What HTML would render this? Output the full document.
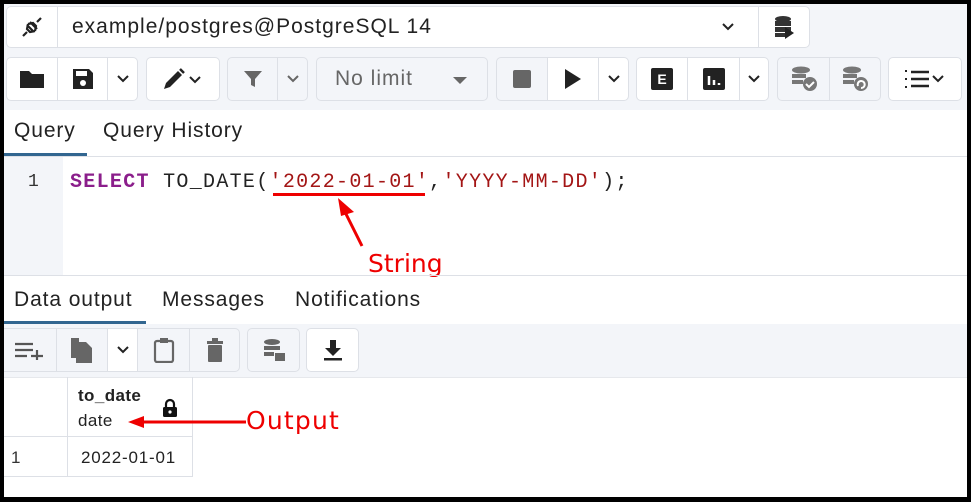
<!DOCTYPE html>
<html><head><meta charset="utf-8"><style>
*{margin:0;padding:0;box-sizing:border-box}
body{width:971px;height:502px;background:#000;position:relative;overflow:hidden;font-family:"Liberation Sans",sans-serif}
#in{position:absolute;left:4px;top:4px;width:963px;height:493px;background:#fff;overflow:hidden}
.a{position:absolute}
.bar{position:absolute;left:0;width:963px;background:#f3f5f9}
.b{position:absolute;border:1px solid #dde0e6;background:#fff;display:flex;align-items:center;justify-content:center}
.g{background:#f3f5f9}
.t{position:absolute;font-size:21px;letter-spacing:0.9px;color:#222}
svg{display:block}
</style></head><body><div id="in">
<div class="bar" style="top:0;height:50px"></div>
<div class="b" style="left:2px;top:2px;width:52px;height:42px;border-radius:5px 0 0 5px">
<svg width="26" height="26" viewBox="0 0 26 26" fill="none" stroke="#222" stroke-width="2.2"><path d="M4 22l4-4M22 4l-4 4M8 11l7 7M11 8l7 7M9 10l-1 5 3 3 5-1M16 17l1-5-3-3-5 1"/></svg></div>
<div class="b" style="left:53px;top:2px;width:702px;height:42px;justify-content:flex-start;padding-left:14px;font-size:21px;letter-spacing:1px;color:#222">example/postgres@PostgreSQL 14
<svg class="a" style="left:663px;top:15px" width="14" height="10" viewBox="0 0 14 10"><path d="M2 2l5 5 5-5" fill="none" stroke="#222" stroke-width="2"/></svg></div>
<div class="b" style="left:754px;top:2px;width:52px;height:42px;border-radius:0 5px 5px 0">
<svg width="22" height="24" viewBox="0 0 22 24"><ellipse cx="10" cy="4" rx="8" ry="3" fill="#333"/><rect x="2" y="6" width="16" height="5" fill="#333"/><rect x="2" y="12" width="16" height="5" fill="#333"/><rect x="2" y="18" width="10" height="4" fill="#333"/><path d="M12 12l9 6-9 6z" fill="#222"/></svg></div>
<div class="bar" style="top:50px;height:56px"></div>
<div class="b" style="left:2px;top:53px;width:52px;height:44px;border-radius:5px 0 0 5px"><svg width="26" height="20"><path d="M1 2h9l3 3h12v14H1z" fill="#222"/></svg></div>
<div class="b" style="left:53px;top:53px;width:51px;height:44px"><svg width="22" height="22"><path d="M1 1h16l4 4v16H1z" fill="#222"/><rect x="4" y="3" width="11" height="5" fill="#fff"/><circle cx="11" cy="15" r="3" fill="#fff"/></svg></div>
<div class="b" style="left:103px;top:53px;width:31px;height:44px;border-radius:0 5px 5px 0"><svg width="14" height="10"><path d="M2 2l5 5 5-5" fill="none" stroke="#222" stroke-width="2"/></svg></div>
<div class="b" style="left:142px;top:53px;width:74px;height:44px;border-radius:5px"><svg width="42" height="24"><path d="M2 22l2-6 12-12 4 4-12 12z" fill="#222"/><path d="M18 2l4 4" stroke="#222" stroke-width="2.5"/><path d="M28 10l5 5 5-5" fill="none" stroke="#222" stroke-width="2"/></svg></div>
<div class="b g" style="left:223px;top:53px;width:51px;height:44px;border-radius:5px 0 0 5px"><svg width="20" height="20"><path d="M1 2h18l-7 8v8l-4-2v-6z" fill="#666"/></svg></div>
<div class="b g" style="left:273px;top:53px;width:31px;height:44px;border-radius:0 5px 5px 0"><svg width="14" height="10"><path d="M2 2l5 5 5-5" fill="none" stroke="#666" stroke-width="2"/></svg></div>
<div class="b g" style="left:312px;top:53px;width:172px;height:44px;border-radius:5px;justify-content:flex-start;padding-left:18px;font-size:21px;letter-spacing:1px;color:#666">No limit<svg class="a" style="left:136px;top:19px" width="14" height="8"><path d="M0 0h14l-7 7z" fill="#666"/></svg></div>
<div class="b g" style="left:492px;top:53px;width:52px;height:44px;border-radius:5px 0 0 5px"><svg width="18" height="18"><rect width="18" height="18" rx="2" fill="#666"/></svg></div>
<div class="b" style="left:543px;top:53px;width:52px;height:44px"><svg width="18" height="20"><path d="M1 0l16 10-16 10z" fill="#222"/></svg></div>
<div class="b" style="left:594px;top:53px;width:31px;height:44px;border-radius:0 5px 5px 0"><svg width="14" height="10"><path d="M2 2l5 5 5-5" fill="none" stroke="#222" stroke-width="2"/></svg></div>
<div class="b" style="left:632px;top:53px;width:52px;height:44px;border-radius:5px 0 0 5px"><svg width="22" height="22"><rect width="22" height="22" rx="2" fill="#222"/><text x="11" y="16" text-anchor="middle" font-size="14" font-weight="bold" fill="#fff" font-family="Liberation Sans">E</text></svg></div>
<div class="b" style="left:683px;top:53px;width:53px;height:44px"><svg width="22" height="22"><rect width="22" height="22" rx="2" fill="#222"/><path d="M6 8v9M11 12v5M16 15v2" stroke="#fff" stroke-width="2.5"/></svg></div>
<div class="b" style="left:735px;top:53px;width:30px;height:44px;border-radius:0 5px 5px 0"><svg width="14" height="10"><path d="M2 2l5 5 5-5" fill="none" stroke="#222" stroke-width="2"/></svg></div>
<div class="b g" style="left:773px;top:53px;width:53px;height:44px;border-radius:5px 0 0 5px"><svg width="28" height="26"><ellipse cx="11" cy="4" rx="9" ry="3.5" fill="#777"/><rect x="2" y="8" width="14" height="4" fill="#777"/><rect x="2" y="14" width="11" height="4" fill="#777"/><circle cx="20" cy="18" r="7" fill="#777"/><path d="M16 18l3 3 5-5" fill="none" stroke="#fff" stroke-width="2"/></svg></div>
<div class="b g" style="left:825px;top:53px;width:52px;height:44px;border-radius:0 5px 5px 0"><svg width="28" height="26"><ellipse cx="11" cy="4" rx="9" ry="3.5" fill="#777"/><rect x="2" y="8" width="14" height="4" fill="#777"/><rect x="2" y="14" width="11" height="4" fill="#777"/><circle cx="20" cy="18" r="7" fill="#777"/><path d="M17 20a3.5 3.5 0 1 1 3 2" fill="none" stroke="#fff" stroke-width="2"/></svg></div>
<div class="b" style="left:884px;top:53px;width:74px;height:44px;border-radius:5px"><svg width="44" height="22"><path d="M2 3h2M2 11h2M2 19h2" stroke="#222" stroke-width="2"/><path d="M8 4h18M8 11h18M8 18h18" stroke="#222" stroke-width="2.5"/><path d="M30 8l5 5 5-5" fill="none" stroke="#222" stroke-width="2"/></svg></div>
<div class="t" style="left:10px;top:115px">Query</div>
<div class="t" style="left:99px;top:115px">Query History</div>
<div class="a" style="left:0;top:149px;width:83px;height:3px;background:#326690"></div>
<div class="a" style="left:0;top:152px;width:963px;height:1px;background:#dde0e6"></div>
<div class="a" style="left:0;top:153px;width:59px;height:118px;background:#f3f5f9"></div>
<div class="a" style="left:24px;top:168px;font:18px 'Liberation Mono',monospace;color:#333">1</div>
<div class="a" style="left:66px;top:167px;font:20px 'Liberation Mono',monospace;letter-spacing:1.3px;color:#222;white-space:pre"><span style="color:#8b1e8b;font-weight:bold">SELECT</span> TO_DATE(<span style="color:#a31515">'2022-01-01'</span>,<span style="color:#a31515">'YYYY-MM-DD'</span>);</div>
<div class="a" style="left:269px;top:189px;width:152px;height:3px;background:#e00"></div>
<svg class="a" style="left:320px;top:190px" width="50" height="60"><path d="M38 52L20 16" stroke="#e00" stroke-width="3"/><path d="M14 4l16 14-13 4z" fill="#e00"/></svg>
<div class="a" style="left:364px;top:245px;font:25px 'DejaVu Sans',sans-serif;color:#e00">String</div>
<div class="a" style="left:0;top:271px;width:963px;height:1px;background:#dde0e6"></div>
<div class="t" style="left:10px;top:284px">Data output</div>
<div class="t" style="left:158px;top:284px">Messages</div>
<div class="t" style="left:291px;top:284px">Notifications</div>
<div class="a" style="left:0;top:317px;width:142px;height:3px;background:#326690"></div>
<div class="bar" style="top:320px;height:53px"></div>
<div class="b g" style="left:-4px;top:324px;width:57px;height:44px"><svg width="32" height="20"><path d="M2 4h18M2 10h18M2 16h12" stroke="#555" stroke-width="2.2"/><path d="M18 16h12M24 10v12" stroke="#555" stroke-width="2.2"/></svg></div>
<div class="b g" style="left:52px;top:324px;width:52px;height:44px"><svg width="26" height="28"><path d="M2 2h8v20h-8z" fill="#666"/><path d="M7 6h10l6 6v15H7z" fill="#666"/></svg></div>
<div class="b" style="left:103px;top:324px;width:31px;height:44px"><svg width="14" height="10"><path d="M2 2l5 5 5-5" fill="none" stroke="#222" stroke-width="2"/></svg></div>
<div class="b g" style="left:133px;top:324px;width:53px;height:44px"><svg width="22" height="26"><rect x="2" y="4" width="18" height="21" rx="2" fill="none" stroke="#666" stroke-width="2.2"/><rect x="7" y="1" width="8" height="5" fill="#666"/></svg></div>
<div class="b g" style="left:185px;top:324px;width:51px;height:44px;border-radius:0 5px 5px 0"><svg width="18" height="24"><rect x="1" y="3" width="16" height="3" fill="#666"/><rect x="6" y="0" width="6" height="3" fill="#666"/><rect x="2" y="7" width="14" height="17" rx="1" fill="#666"/></svg></div>
<div class="b g" style="left:243px;top:324px;width:53px;height:44px;border-radius:5px"><svg width="24" height="24"><ellipse cx="10" cy="4" rx="8" ry="3" fill="#666"/><rect x="2" y="8" width="16" height="4" fill="#666"/><rect x="2" y="14" width="10" height="4" fill="#666"/><rect x="13" y="15" width="10" height="8" fill="#666"/></svg></div>
<div class="b" style="left:302px;top:324px;width:53px;height:44px;border-radius:5px"><svg width="20" height="22"><path d="M7 1h6v8h5l-8 8-8-8h5z" fill="#222"/><rect x="1" y="19" width="18" height="2.5" fill="#222"/></svg></div>
<div class="a" style="left:0;top:373px;width:963px;height:1px;background:#e6e8ec"></div>
<div class="a" style="left:-1px;top:373px;width:65px;height:60px;border-right:1px solid #dde0e6;border-bottom:1px solid #dde0e6"></div>
<div class="a" style="left:63px;top:373px;width:126px;height:60px;border-right:1px solid #dde0e6;border-bottom:1px solid #dde0e6"></div>
<div class="a" style="left:74px;top:382px;font-size:17px;letter-spacing:0.4px;font-weight:bold;color:#222">to_date</div>
<div class="a" style="left:74px;top:407px;font-size:17px;letter-spacing:0.4px;color:#222">date</div>
<svg class="a" style="left:158px;top:394px" width="16" height="20"><path d="M4 9V6a4 4 0 0 1 8 0v3" fill="none" stroke="#111" stroke-width="2.2"/><rect x="1" y="9" width="14" height="10" rx="1.5" fill="#111"/><circle cx="8" cy="14" r="1.6" fill="#fff"/></svg>
<svg class="a" style="left:124px;top:410px" width="120" height="16"><path d="M0 8l16-6v12z" fill="#e00"/><path d="M14 8h104" stroke="#e00" stroke-width="3"/></svg>
<div class="a" style="left:242px;top:402px;font:25px 'DejaVu Sans',sans-serif;letter-spacing:1.2px;color:#e00">Output</div>
<div class="a" style="left:-1px;top:433px;width:65px;height:40px;border-right:1px solid #dde0e6;border-bottom:1px solid #dde0e6"></div>
<div class="a" style="left:63px;top:433px;width:126px;height:40px;border-right:1px solid #dde0e6;border-bottom:1px solid #dde0e6"></div>
<div class="a" style="left:7px;top:444px;font-size:17px;color:#333">1</div>
<div class="a" style="left:77px;top:444px;font-size:17px;letter-spacing:0.8px;color:#222">2022-01-01</div>
</div></body></html>
